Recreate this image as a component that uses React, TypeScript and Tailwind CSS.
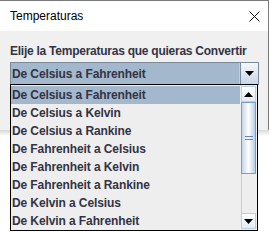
import React from 'react';

const items = [
  'De Celsius a Fahrenheit',
  'De Celsius a Kelvin',
  'De Celsius a Rankine',
  'De Fahrenheit a Celsius',
  'De Fahrenheit a Kelvin',
  'De Fahrenheit a Rankine',
  'De Kelvin a Celsius',
  'De Kelvin a Fahrenheit',
];

function Triangle({ up }: { up?: boolean }) {
  return (
    <svg width="9" height="5" viewBox="0 0 9 5">
      {up ? <path d="M0 5 L4.5 0 L9 5 Z" fill="#000" /> : <path d="M0 0 L9 0 L4.5 5 Z" fill="#000" />}
    </svg>
  );
}

export default function App() {
  return (
    <div className="relative w-[269px] h-[232px] bg-white overflow-hidden font-['Liberation_Sans',Arial,sans-serif]">
      {/* Dialog */}
      <div className="h-[130px] flex flex-col border-t border-r border-[#7a7a7a]">
        <div className="h-[30px] bg-white flex items-center justify-between pl-[10px] pr-[8px]">
          <span className="text-[12px] text-black">Temperaturas</span>
          <svg width="11" height="11" viewBox="0 0 11 11">
            <path d="M0.5 0.5 L10.5 10.5 M10.5 0.5 L0.5 10.5" stroke="#111" strokeWidth="1" />
          </svg>
        </div>
        <div className="flex-1 bg-[#f0f0f0] px-[10px] pt-[12px]">
          <div className="text-[12px] font-bold text-[#333344] leading-[16px] tracking-[-0.25px] whitespace-nowrap">
            Elije la Temperaturas que quieras Convertir
          </div>
          <div className="mt-[3px] h-[23px] w-[249px] flex border border-[#7a8a99] bg-[#a3b8cc]">
            <div className="flex-1 flex items-center pl-[1px] border-r border-[#b8cfe5]">
              <span className="text-[12px] font-bold text-[#333344] tracking-[-0.1px]">De Celsius a Fahrenheit</span>
            </div>
            <div className="w-[18px] flex items-center justify-center bg-gradient-to-b from-[#f4f7fb] to-[#c8d6e6] border-l border-[#7a8a99]">
              <Triangle />
            </div>
          </div>
        </div>
      </div>
      {/* window shadow */}
      <div className="h-[6px] bg-gradient-to-b from-[#d8d8d8] to-white" />

      {/* Popup list */}
      <div className="absolute left-[10px] top-[84px] w-[248px] h-[147px] border border-black bg-[#eeeeee] flex">
        <div className="flex-1 flex flex-col pt-[1px]">
          {items.map((t, i) => (
            <div
              key={t}
              className={`h-[18px] flex items-center pl-[1px] text-[12px] font-bold text-[#333344] tracking-[-0.1px] whitespace-nowrap ${i === 0 ? 'bg-[#a3b8cc]' : ''}`}
            >
              {t}
            </div>
          ))}
        </div>
        <div className="w-[17px] flex flex-col border-l border-[#eeeeee] pt-[1px] pr-[1px]">
          <div className="h-[16px] flex items-center justify-center bg-gradient-to-b from-white to-[#e3eaf2] border border-[#b8cfe5]">
            <Triangle up />
          </div>
          <div className="h-[72px] flex items-center justify-center bg-gradient-to-r from-[#c5d6e8] via-white to-[#b8cfe5] border border-[#7a9ccc]">
            <div className="flex flex-col gap-[2px]">
              <div className="w-[8px] h-[1px] bg-[#6382bf]" />
              <div className="w-[8px] h-[1px] bg-[#6382bf]" />
            </div>
          </div>
          <div className="flex-1 border-l border-[#b8cfe5]" />
          <div className="h-[16px] mb-[1px] flex items-center justify-center bg-gradient-to-b from-white to-[#e3eaf2] border border-[#b8cfe5]">
            <Triangle />
          </div>
        </div>
      </div>
    </div>
  );
}
